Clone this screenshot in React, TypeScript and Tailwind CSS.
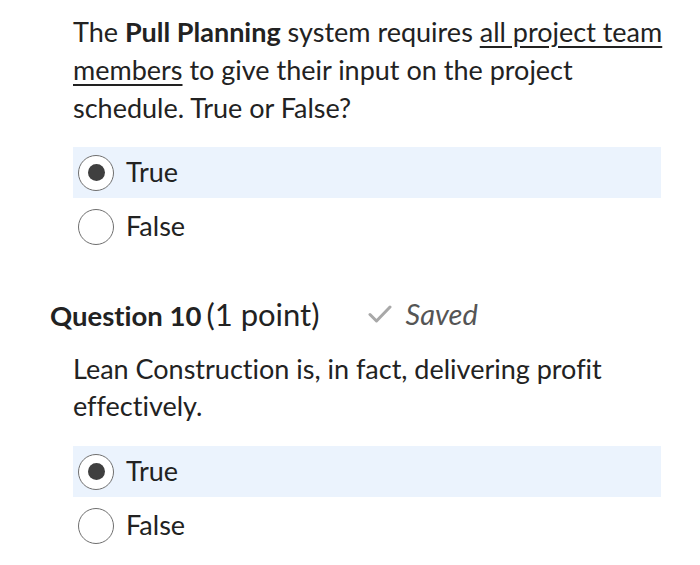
import React, { useState } from 'react';

type Opt = { label: string };

const Radio: React.FC<{ checked: boolean }> = ({ checked }) => (
  <span className="flex h-[36px] w-[36px] shrink-0 items-center justify-center rounded-full border-[1.5px] border-[#6f6f6f] bg-white">
    {checked && <span className="h-[17px] w-[17px] rounded-full bg-[#3f3f3f]" />}
  </span>
);

const Options: React.FC<{ options: Opt[]; selected: number; onPick: (i: number) => void }> = ({
  options,
  selected,
  onPick,
}) => (
  <div className="ml-[73px] flex w-[588px] flex-col gap-[3px]">
    {options.map((o, i) => (
      <label
        key={o.label}
        onClick={() => onPick(i)}
        className={`flex h-[51px] cursor-pointer items-center gap-[12px] pl-[5px] ${
          i === selected ? 'bg-[#ebf3fd]' : ''
        }`}
      >
        <Radio checked={i === selected} />
        <span>{o.label}</span>
      </label>
    ))}
  </div>
);

const opts: Opt[] = [{ label: 'True' }, { label: 'False' }];

export default function App() {
  const [q9, setQ9] = useState(0);
  const [q10, setQ10] = useState(0);

  return (
    <div
      className="h-[565px] w-[700px] overflow-hidden bg-white text-[27px] text-[#222] [font-variant-ligatures:none]"
      style={{ fontFamily: 'Lato, "Noto Sans", sans-serif' }}
    >
      {/* question 9 */}
      <p className="ml-[73px] mt-[13px] whitespace-nowrap leading-[38px]">
        The <b>Pull Planning</b> system requires <u className="underline-offset-4">all project team</u>
        <br />
        <u className="underline-offset-4">members</u> to give their input on the project
        <br />
        schedule. True or False?
      </p>
      <div className="mt-[20px]">
        <Options options={opts} selected={q9} onPick={setQ9} />
      </div>

      {/* question 10 */}
      <div className="ml-[50px] mt-[42px] flex h-[40px] items-center">
        <h3 className="flex items-baseline whitespace-nowrap">
          <b className="text-[27.5px]">Question 10</b>
          <span className="ml-[5px] text-[31px]">(1 point)</span>
        </h3>
        <span className="ml-[48px] flex items-center gap-[14px] text-[29px] text-[#555]">
          <svg width="24" height="20" viewBox="0 0 24 20" fill="none">
            <path d="M2 10.5 L8.5 17 L22 3" stroke="#a8a8a8" strokeWidth="3" strokeLinecap="round" strokeLinejoin="round" />
          </svg>
          <i>Saved</i>
        </span>
      </div>
      <p className="ml-[73px] mt-[16px] whitespace-nowrap leading-[37px]">
        Lean Construction is, in fact, delivering profit
        <br />
        effectively.
      </p>
      <div className="mt-[22px]">
        <Options options={opts} selected={q10} onPick={setQ10} />
      </div>
    </div>
  );
}
